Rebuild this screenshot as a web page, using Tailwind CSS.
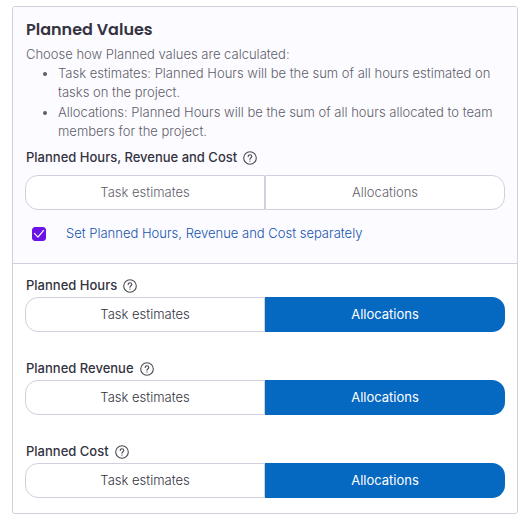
<!DOCTYPE html>
<html lang="en">
<head>
<meta charset="utf-8">
<meta name="viewport" content="width=device-width, initial-scale=1">
<title>Planned Values</title>
<script src="https://cdn.jsdelivr.net/npm/@tailwindcss/browser@4"></script>
</head>
<body class="bg-white pt-[6px] pr-[9px] pb-1 pl-3 font-[Inter,sans-serif] text-[13px] leading-[19px] font-light text-[#5f5e6a]">
<svg class="hidden" aria-hidden="true">
  <symbol id="help" viewBox="0 0 14 14">
    <circle cx="7" cy="7" r="6.3" fill="none" stroke="currentColor" stroke-width="1.1"/>
    <path d="M5.2 5.5C5.2 4.4 6 3.8 7 3.8s1.8.6 1.8 1.6c0 1.3-1.8 1.4-1.8 2.8" fill="none" stroke="currentColor" stroke-width="1.1" stroke-linecap="round"/>
    <circle cx="7" cy="10.1" r=".7" fill="currentColor"/>
  </symbol>
</svg>
<main class="overflow-hidden rounded-[3px] border border-[#d2d0de]">
  <section class="border-b border-[#d2d0de] bg-[#fcfbff] px-3 pt-3 pb-5">
    <h1 class="pl-px font-[Poppins,Inter,sans-serif] text-base leading-[22px] font-semibold text-[#34333f]">Planned Values</h1>
    <p class="mt-1 pl-px">Choose how Planned values are calculated:</p>
    <ul class="list-disc pl-[33px]">
      <li>Task estimates: Planned Hours will be the sum of all hours estimated on tasks on the project.</li>
      <li class="mt-px">Allocations: Planned Hours will be the sum of all hours allocated to team members for the project.</li>
    </ul>
    <div role="group" aria-labelledby="all-label" class="mt-[7px]">
      <div class="flex items-center gap-[6px] pl-px text-[#34333f]">
        <h2 id="all-label" class="font-medium">Planned Hours, Revenue and Cost</h2>
        <button type="button" aria-label="Help"><svg class="size-[14px] text-[#4a4954]"><use href="#help"/></svg></button>
      </div>
      <div class="mt-2 grid grid-cols-2">
        <button type="button" disabled class="h-[35px] rounded-l-[13px] border border-[#d2d0de] bg-white">Task estimates</button>
        <button type="button" disabled class="h-[35px] rounded-r-[13px] border border-[#d2d0de] bg-white">Allocations</button>
      </div>
    </div>
    <div class="mt-[14px] flex items-center pl-[7px]">
      <span class="relative size-[14px]">
        <input id="separate" type="checkbox" checked class="peer block size-[14px] appearance-none rounded-[3px] border border-[#6a11e8] bg-white checked:bg-[#6a11e8]">
        <svg class="pointer-events-none absolute inset-0 hidden size-[14px] peer-checked:block" viewBox="0 0 14 14" fill="none" stroke="white" stroke-width="1.2"><path d="M2.2 6.2l3.8 4 5.8-7"/></svg>
      </span>
      <label for="separate" class="pl-5 text-[#1553b0]">Set Planned Hours, Revenue and Cost separately</label>
    </div>
  </section>
  <section class="grid gap-[27px] px-3 pt-3 pb-[15px] text-[#34333f]">
    <div role="group" aria-labelledby="hours-label">
      <div class="flex items-center gap-[6px] pl-px">
        <h2 id="hours-label" class="font-medium">Planned Hours</h2>
        <button type="button" aria-label="Help"><svg class="size-[14px] text-[#4a4954]"><use href="#help"/></svg></button>
      </div>
      <div class="mt-[2px] grid grid-cols-2">
        <button type="button" aria-pressed="false" class="h-[35px] rounded-l-[13px] border border-[#d2d0de] bg-white">Task estimates</button>
        <button type="button" aria-pressed="true" class="h-[35px] rounded-r-[13px] bg-[#0669c1] font-normal text-white">Allocations</button>
      </div>
    </div>
    <div role="group" aria-labelledby="revenue-label">
      <div class="flex items-center gap-[6px] pl-px">
        <h2 id="revenue-label" class="font-medium">Planned Revenue</h2>
        <button type="button" aria-label="Help"><svg class="size-[14px] text-[#4a4954]"><use href="#help"/></svg></button>
      </div>
      <div class="mt-[2px] grid grid-cols-2">
        <button type="button" aria-pressed="false" class="h-[35px] rounded-l-[13px] border border-[#d2d0de] bg-white">Task estimates</button>
        <button type="button" aria-pressed="true" class="h-[35px] rounded-r-[13px] bg-[#0669c1] font-normal text-white">Allocations</button>
      </div>
    </div>
    <div role="group" aria-labelledby="cost-label">
      <div class="flex items-center gap-[6px] pl-px">
        <h2 id="cost-label" class="font-medium">Planned Cost</h2>
        <button type="button" aria-label="Help"><svg class="size-[14px] text-[#4a4954]"><use href="#help"/></svg></button>
      </div>
      <div class="mt-[2px] grid grid-cols-2">
        <button type="button" aria-pressed="false" class="h-[35px] rounded-l-[13px] border border-[#d2d0de] bg-white">Task estimates</button>
        <button type="button" aria-pressed="true" class="h-[35px] rounded-r-[13px] bg-[#0669c1] font-normal text-white">Allocations</button>
      </div>
    </div>
  </section>
</main>
</body>
</html>
